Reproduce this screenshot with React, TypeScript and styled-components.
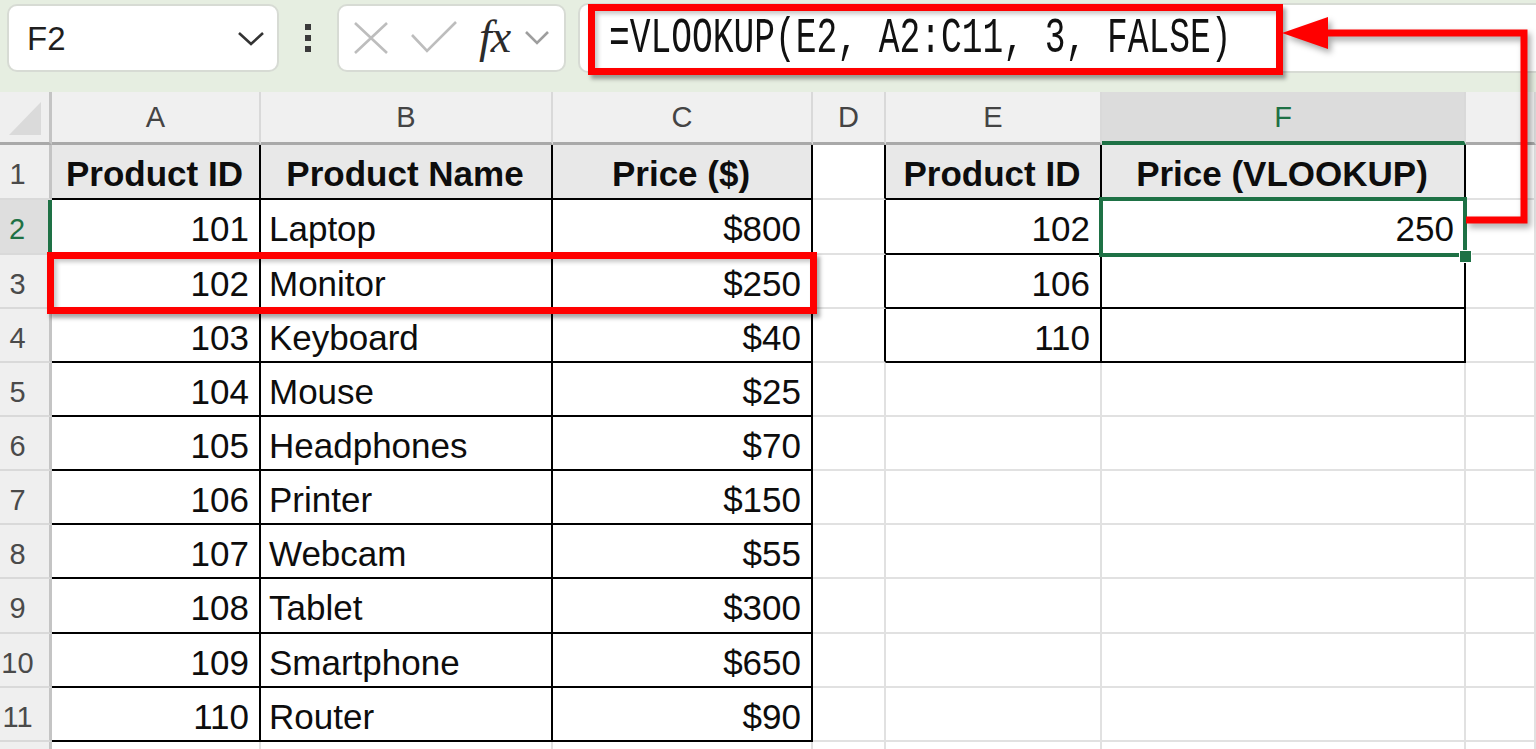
import styled, { createGlobalStyle } from 'styled-components';

const GlobalStyle = createGlobalStyle`
  html, body {
    margin: 0;
    padding: 0;
    background: #ffffff;
    overflow: hidden;
  }
  body {
    font-family: "Liberation Sans", Arial, sans-serif;
  }
`;

// row header, then A..F; G takes the rest
const COLS = [52, 209, 292, 260, 73, 216, 364];
const ROWS = [55, 55, 54, 54, 54, 54, 54, 54, 55, 54, 54, 54];
// last column (G) is only partly visible and has no letter in the shot
const LETTERS = ['A', 'B', 'C', 'D', 'E', 'F', ''];
const GREEN = '#1e7145';
const GRID = '#e1e1e1';

type Align = 'left' | 'right' | 'center';

const products: [number, string, string][] = [
  [101, 'Laptop', '$800'],
  [102, 'Monitor', '$250'],
  [103, 'Keyboard', '$40'],
  [104, 'Mouse', '$25'],
  [105, 'Headphones', '$70'],
  [106, 'Printer', '$150'],
  [107, 'Webcam', '$55'],
  [108, 'Tablet', '$300'],
  [109, 'Smartphone', '$650'],
  [110, 'Router', '$90'],
];

const lookups = ['102', '106', '110'];

const Page = styled.div`
  position: relative;
  width: 1536px;
  height: 749px;
  overflow: hidden;
  display: flex;
  flex-direction: column;
`;

const FormulaBar = styled.header`
  display: flex;
  align-items: flex-start;
  height: 92px;
  flex: 0 0 92px;
  box-sizing: border-box;
  padding: 4px 0 0 7px;
  background: #e6eee1;
`;

const NameBox = styled.div`
  display: flex;
  align-items: center;
  justify-content: space-between;
  width: 272px;
  height: 68px;
  box-sizing: border-box;
  padding: 2px 12px 0 18px;
  background: #ffffff;
  border: 2px solid #d7dbd4;
  border-radius: 10px;
  font-size: 33px;
  color: #1f1f1f;
`;

const Kebab = styled.div`
  width: 58px;
  height: 68px;
  display: flex;
  flex-direction: column;
  align-items: center;
  justify-content: center;
  gap: 5px;
  > span {
    width: 6px;
    height: 6px;
    background: #3a3a3a;
  }
`;

const ButtonGroup = styled.div`
  display: flex;
  align-items: center;
  width: 229px;
  height: 68px;
  box-sizing: border-box;
  padding-left: 14px;
  gap: 22px;
  background: #ffffff;
  border: 2px solid #d7dbd4;
  border-radius: 10px;
`;

const Fx = styled.span`
  font-family: "Liberation Serif", "Times New Roman", serif;
  font-style: italic;
  font-size: 46px;
  color: #2b2b2b;
  margin-top: -4px;
  margin-right: -8px;
  letter-spacing: -1px;
`;

const FormulaInput = styled.div`
  flex: 1;
  display: flex;
  align-items: center;
  margin-left: 12px;
  margin-top: -1px;
  height: 70px;
  box-sizing: border-box;
  padding-left: 29px;
  background: #ffffff;
  border: 2px solid #d7dbd4;
  border-right: none;
  border-radius: 10px 0 0 10px;
`;

const FormulaText = styled.span`
  display: inline-block;
  font-family: "Liberation Mono", "Courier New", monospace;
  font-size: 34.6px;
  color: #111111;
  white-space: pre;
  transform: scaleY(1.45);
  transform-origin: left center;
`;

const Sheet = styled.div`
  display: grid;
  grid-template-columns: ${COLS.map((w) => `${w}px`).join(' ')} 1fr;
  grid-template-rows: 53px ${ROWS.map((h) => `${h}px`).join(' ')};
  flex: 1;
`;

const Corner = styled.div`
  position: relative;
  background: #efefef;
  border-right: 3px solid #c4c4c4;
  border-bottom: 3px solid #a9a9a9;
  box-sizing: border-box;
  &::after {
    content: '';
    position: absolute;
    right: 8px;
    bottom: 7px;
    width: 0;
    height: 0;
    border-left: 32px solid transparent;
    border-bottom: 33px solid #dadada;
  }
`;

const ColHead = styled.div<{ $active?: boolean }>`
  display: flex;
  align-items: center;
  justify-content: center;
  box-sizing: border-box;
  background: ${(p) => (p.$active ? '#dcdcdc' : '#f0f0f0')};
  border-right: 2px solid #d9d9d9;
  border-bottom: ${(p) => (p.$active ? `4px solid ${GREEN}` : '3px solid #a9a9a9')};
  font-size: 29px;
  padding-top: ${(p) => (p.$active ? '1px' : '0')};
  color: ${(p) => (p.$active ? GREEN : '#444444')};
`;

const RowHead = styled.div<{ $active?: boolean }>`
  display: flex;
  align-items: center;
  justify-content: center;
  box-sizing: border-box;
  padding: 6px 14px 0 0;
  background: ${(p) => (p.$active ? '#dedede' : '#efefef')};
  border-right: ${(p) => (p.$active ? `4px solid ${GREEN}` : '3px solid #c4c4c4')};
  border-bottom: 2px solid #d9d9d9;
  font-size: 29px;
  color: ${(p) => (p.$active ? GREEN : '#4a4a4a')};
`;

const Cell = styled.div<{
  $align: Align;
  $bold?: boolean;
  $fill?: boolean;
  $right: string;
  $bottom: string;
  $selected?: boolean;
}>`
  position: relative;
  z-index: ${(p) => (p.$selected ? 2 : 'auto')};
  display: flex;
  align-items: center;
  justify-content: ${(p) =>
    p.$align === 'left' ? 'flex-start' : p.$align === 'right' ? 'flex-end' : 'center'};
  box-sizing: border-box;
  padding: 5px 10px 0 8px;
  background: ${(p) => (p.$fill ? '#e8e8e8' : '#ffffff')};
  border-right: 2px solid ${(p) => p.$right};
  border-bottom: 2px solid ${(p) => p.$bottom};
  font-size: 35px;
  font-weight: ${(p) => (p.$bold ? 700 : 400)};
  color: #0d0d0d;
  white-space: nowrap;

  ${(p) =>
    p.$selected &&
    `
    &::after {
      content: '';
      position: absolute;
      top: -3px;
      left: -3px;
      right: -3px;
      bottom: -4px;
      border: 4px solid ${GREEN};
      pointer-events: none;
    }
    &::before {
      content: '';
      position: absolute;
      right: -8px;
      bottom: -10px;
      width: 11px;
      height: 11px;
      background: ${GREEN};
      border: 1px solid #ffffff;
      z-index: 3;
    }
  `}
`;

const RedFrame = styled.div<{ $x: number; $y: number; $w: number; $h: number }>`
  position: absolute;
  z-index: 5;
  left: ${(p) => p.$x}px;
  top: ${(p) => p.$y}px;
  width: ${(p) => p.$w}px;
  height: ${(p) => p.$h}px;
  box-sizing: border-box;
  border: 7px solid #ff0000;
  box-shadow: 3px 4px 4px rgba(0, 0, 0, 0.35), inset 3px 3px 4px rgba(0, 0, 0, 0.22);
  pointer-events: none;
`;

const Arrow = styled.svg`
  position: absolute;
  z-index: 5;
  left: 1270px;
  top: 0;
  filter: drop-shadow(3px 4px 3px rgba(0, 0, 0, 0.35));
  pointer-events: none;
`;

function inTable(r: number, c: number) {
  return (r >= 1 && r <= 11 && c >= 0 && c <= 2) || (r >= 1 && r <= 4 && (c === 4 || c === 5));
}

function cellContent(r: number, c: number): { text: string; align: Align; bold?: boolean } {
  if (r === 1) {
    const heads: Record<number, string> = {
      0: 'Product ID',
      1: 'Product Name',
      2: 'Price ($)',
      4: 'Product ID',
      5: 'Price (VLOOKUP)',
    };
    return { text: heads[c] ?? '', align: 'center', bold: true };
  }
  const p = products[r - 2];
  if (p && c === 0) return { text: String(p[0]), align: 'right' };
  if (p && c === 1) return { text: p[1], align: 'left' };
  if (p && c === 2) return { text: p[2], align: 'right' };
  if (c === 4 && r <= 4) return { text: lookups[r - 2], align: 'right' };
  if (c === 5 && r === 2) return { text: '250', align: 'right' };
  return { text: '', align: 'left' };
}

const XIcon = () => (
  <svg width="36" height="34" viewBox="0 0 36 34">
    <path d="M2 2 L34 32 M34 2 L2 32" stroke="#bdbdbd" strokeWidth="2.6" fill="none" />
  </svg>
);

const CheckIcon = () => (
  <svg width="46" height="34" viewBox="0 0 46 34">
    <path d="M1 14 L16 30 L45 1" stroke="#bdbdbd" strokeWidth="2.6" fill="none" />
  </svg>
);

const Chevron = ({ color, w }: { color: string; w: number }) => (
  <svg width={w} height="16" viewBox={`0 0 ${w} 16`}>
    <path d={`M2 2 L${w / 2} 13 L${w - 2} 2`} stroke={color} strokeWidth="2.6" fill="none" />
  </svg>
);

export default function App() {
  return (
    <Page>
      <GlobalStyle />
      <FormulaBar>
        <NameBox>
          <span>F2</span>
          <Chevron color="#333333" w={28} />
        </NameBox>
        <Kebab>
          <span />
          <span />
          <span />
        </Kebab>
        <ButtonGroup>
          <XIcon />
          <CheckIcon />
          <Fx>fx</Fx>
          <Chevron color="#9e9e9e" w={26} />
        </ButtonGroup>
        <FormulaInput>
          <FormulaText>=VLOOKUP(E2, A2:C11, 3, FALSE)</FormulaText>
        </FormulaInput>
      </FormulaBar>

      <Sheet>
        <Corner />
        {LETTERS.map((l, i) => (
          <ColHead key={`col-${i}`} $active={l === 'F'}>
            {l}
          </ColHead>
        ))}
        {ROWS.map((_, ri) => {
          const r = ri + 1;
          return [
            // row 12 is only a sliver at the bottom edge; its number is out of view
            <RowHead key={`rh-${r}`} $active={r === 2}>
              {r <= 11 ? r : ''}
            </RowHead>,
            ...LETTERS.map((_, c) => {
              const content = cellContent(r, c);
              const boxed = inTable(r, c);
              return (
                <Cell
                  key={`cell-${r}-${c}`}
                  $align={content.align}
                  $bold={content.bold}
                  $fill={r === 1 && boxed}
                  $right={boxed || inTable(r, c + 1) ? '#000000' : GRID}
                  $bottom={boxed || inTable(r + 1, c) ? '#000000' : GRID}
                  $selected={r === 2 && c === 5}
                >
                  {content.text}
                </Cell>
              );
            }),
          ];
        })}
      </Sheet>

      <RedFrame $x={588} $y={4} $w={695} $h={71} />
      <RedFrame $x={47} $y={252} $w={770} $h={62} />

      <Arrow width="266" height="240" viewBox="0 0 266 240">
        <path d="M196 220 L254 220 L254 33 L56 33" stroke="#ff0000" strokeWidth="7" fill="none" />
        <polygon points="12,33 58,17 58,49" fill="#ff0000" />
      </Arrow>
    </Page>
  );
}
